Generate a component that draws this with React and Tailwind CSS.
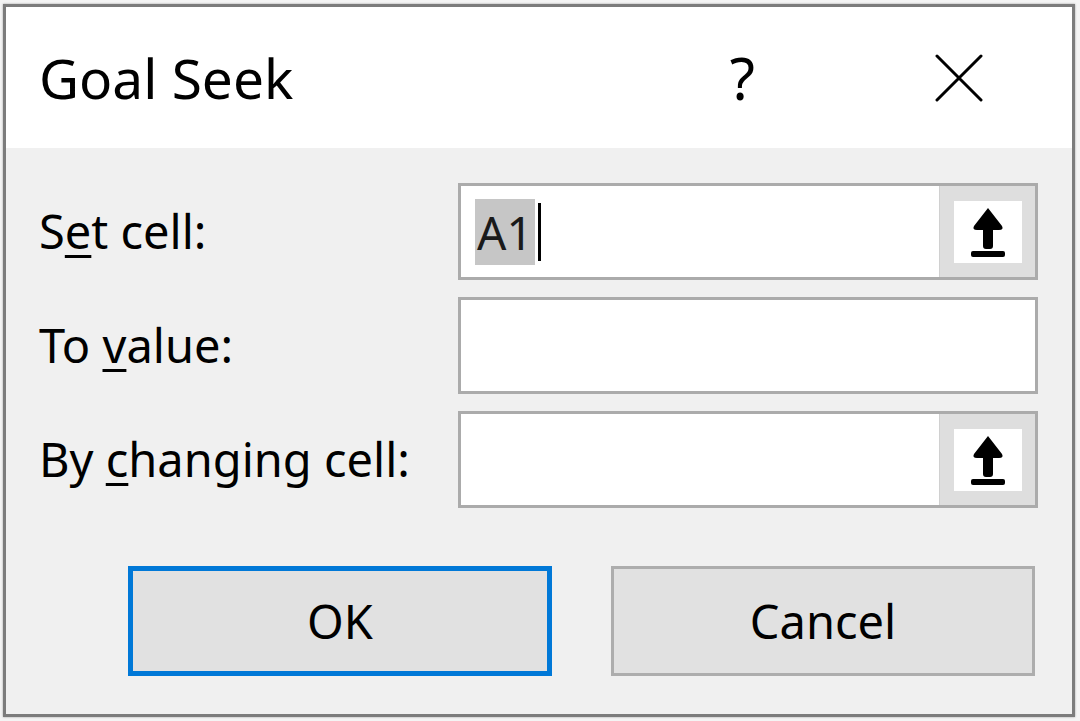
import React from 'react';

const RefButton = () => (
    <div className="h-full w-[96px] bg-[#dedede] flex items-center justify-center border-l border-[#d0d0d0]">
        <div className="w-[68px] h-[62px] bg-white flex items-center justify-center">
            <svg width="36" height="52" viewBox="0 0 36 52">
                <path d="M18 2 L4 20 Q2 24 7 24 L13 24 L13 40 Q13 43 16 43 L20 43 Q23 43 23 40 L23 24 L29 24 Q34 24 32 20 Z" fill="#000" />
                <rect x="1" y="45" width="34" height="6" rx="2" fill="#000" />
            </svg>
        </div>
    </div>
);

const Field = ({ children, withButton }) => (
    <div className="w-[580px] h-[97px] border-[3px] border-[#ababab] bg-white flex items-stretch">
        <div className="flex-1 flex items-center pl-[14px]">{children}</div>
        {withButton && <RefButton />}
    </div>
);

const Row = ({ label, children, withButton }) => (
    <div className="flex items-center">
        <div className="w-[419px] text-[47px] leading-none text-black">{label}</div>
        <Field withButton={withButton}>{children}</Field>
    </div>
);

const App = () => {
    return (
        <div className="w-[1080px] h-[721px] bg-[#f4f4f4] pt-[4px] pl-[3px] font-['Noto_Sans',sans-serif] overflow-hidden">
            <div className="w-[1072px] h-[713px] border-[3px] border-[#7c7c7c] bg-[#f0f0f0] flex flex-col shadow-[0_0_2px_rgba(0,0,0,0.35)]">
                {/* title bar */}
                <div className="h-[141px] bg-white flex items-center pl-[33px] pr-[89px]">
                    <span className="text-[55px] text-black leading-none">Goal Seek</span>
                    <span className="flex-1" />
                    <span className="text-[58px] text-black leading-none">?</span>
                    <svg className="ml-[180px]" width="48" height="48" viewBox="0 0 48 48">
                        <path d="M2 2 L46 46 M46 2 L2 46" stroke="#000" strokeWidth="3" strokeLinecap="round" />
                    </svg>
                </div>

                {/* body */}
                <div className="flex-1 flex flex-col pl-[33px] pt-[35px]">
                    <div className="flex flex-col gap-[17px]">
                        <Row label={<span>S<span className="underline decoration-[3px] underline-offset-[6px]">e</span>t cell:</span>} withButton>
                            <span className="flex items-center">
                                <span className="bg-[#c6c6c6] text-[46px] leading-[66px] px-[2px] text-[#1a1a1a]">A1</span>
                                <span className="w-[3px] h-[58px] bg-black ml-[3px]" />
                            </span>
                        </Row>
                        <Row label={<span>To <span className="underline decoration-[3px] underline-offset-[6px]">v</span>alue:</span>} />
                        <Row label={<span>By <span className="underline decoration-[3px] underline-offset-[6px]">c</span>hanging cell:</span>} withButton />
                    </div>

                    <div className="flex mt-[58px] pl-[89px] gap-[59px]">
                        <button className="w-[424px] h-[110px] border-[5px] border-[#0078d7] bg-[#e1e1e1] text-[47px] text-black leading-none">
                            OK
                        </button>
                        <button className="w-[424px] h-[110px] border-[3px] border-[#adadad] bg-[#e1e1e1] text-[47px] text-black leading-none">
                            Cancel
                        </button>
                    </div>
                </div>
            </div>
        </div>
    );
};

export default App;
